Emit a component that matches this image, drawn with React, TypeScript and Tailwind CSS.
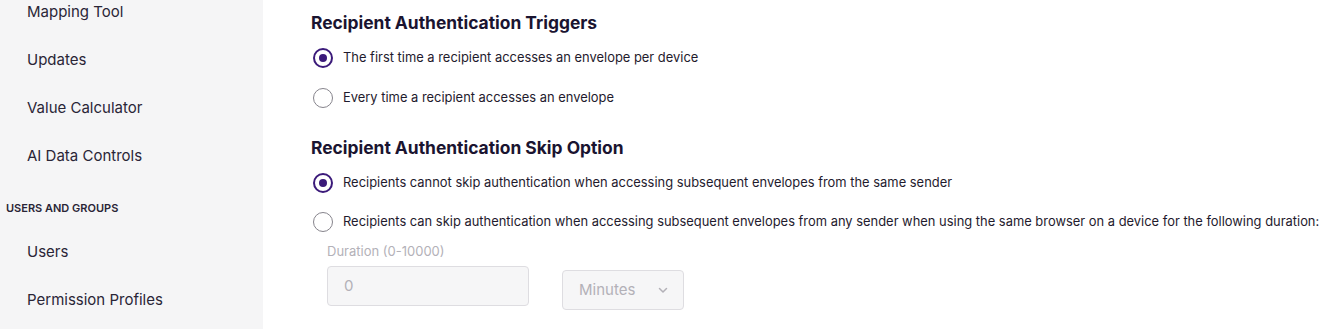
import React from "react";

const NAV_TOP = ["Mapping Tool", "Updates", "Value Calculator", "AI Data Controls"];
const NAV_USERS = ["Users", "Permission Profiles"];

function Radio({ checked, label }: { checked: boolean; label: string }) {
  return (
    <label className="flex items-center gap-[10px] h-[20px]">
      <span
        className={`flex items-center justify-center w-[20px] h-[20px] rounded-full bg-white ${
          checked ? "border-2 border-[#3b1a7a]" : "border-[1.5px] border-[#86848c]"
        }`}
      >
        {checked && <span className="w-[8px] h-[8px] rounded-full bg-[#3b1a7a]" />}
      </span>
      <span className="text-[12.92px] text-[#1f1b2e] whitespace-nowrap">{label}</span>
    </label>
  );
}

export default function App() {
  return (
    <div
      className="flex w-[1338px] h-[329px] overflow-hidden bg-white"
      style={{ fontFamily: "Inter, 'Noto Sans', sans-serif" }}
    >
      {/* Sidebar */}
      <aside className="w-[263px] shrink-0 bg-[#f5f5f6] -mt-[12px]">
        {NAV_TOP.map((item) => (
          <div key={item} className="h-[48px] flex items-center pl-[27px] text-[15px] text-[#2a2536]">
            {item}
          </div>
        ))}
        <div className="h-[48px] flex items-center pl-[6px] pt-[8px] text-[11px] font-semibold uppercase text-[#2a2536]">
          Users and Groups
        </div>
        {NAV_USERS.map((item) => (
          <div key={item} className="h-[48px] flex items-center pl-[27px] text-[15px] text-[#2a2536]">
            {item}
          </div>
        ))}
      </aside>

      {/* Main */}
      <main className="flex-1 pl-[48px] pt-[12px]">
        <h2 className="text-[17.4px] font-bold text-[#1a1430] leading-[22px]">
          Recipient Authentication Triggers
        </h2>
        <div className="mt-[14px] flex flex-col gap-[20px] pl-[2px]">
          <Radio checked label="The first time a recipient accesses an envelope per device" />
          <Radio checked={false} label="Every time a recipient accesses an envelope" />
        </div>

        <h2 className="mt-[29px] text-[17.4px] font-bold text-[#1a1430] leading-[22px]">
          Recipient Authentication Skip Option
        </h2>
        <div className="mt-[14px] flex flex-col gap-[19px] pl-[2px]">
          <Radio checked label="Recipients cannot skip authentication when accessing subsequent envelopes from the same sender" />
          <Radio
            checked={false}
            label="Recipients can skip authentication when accessing subsequent envelopes from any sender when using the same browser on a device for the following duration:"
          />
        </div>

        <div className="mt-[11px] pl-[16px]">
          <div className="text-[13px] text-[#b3b1b8] leading-[16px]">Duration (0-10000)</div>
          <div className="mt-[7px] flex items-start gap-[33px]">
            <div className="w-[202px] h-[40px] rounded-[4px] border border-[#dedde1] bg-[#f6f6f7] flex items-center px-[16px] text-[15px] text-[#b3b1b8]">
              0
            </div>
            <div className="mt-[4px] w-[122px] h-[40px] rounded-[4px] border border-[#dedde1] bg-[#f6f6f7] flex items-center justify-between pl-[16px] pr-[13px] text-[15px] text-[#b3b1b8]">
              <span>Minutes</span>
              <svg width="14" height="14" viewBox="0 0 14 14" fill="none">
                <path d="M3.5 5.5 L7 9 L10.5 5.5" stroke="#b3b1b8" strokeWidth="1.5" strokeLinecap="round" strokeLinejoin="round" />
              </svg>
            </div>
          </div>
        </div>
      </main>
    </div>
  );
}
